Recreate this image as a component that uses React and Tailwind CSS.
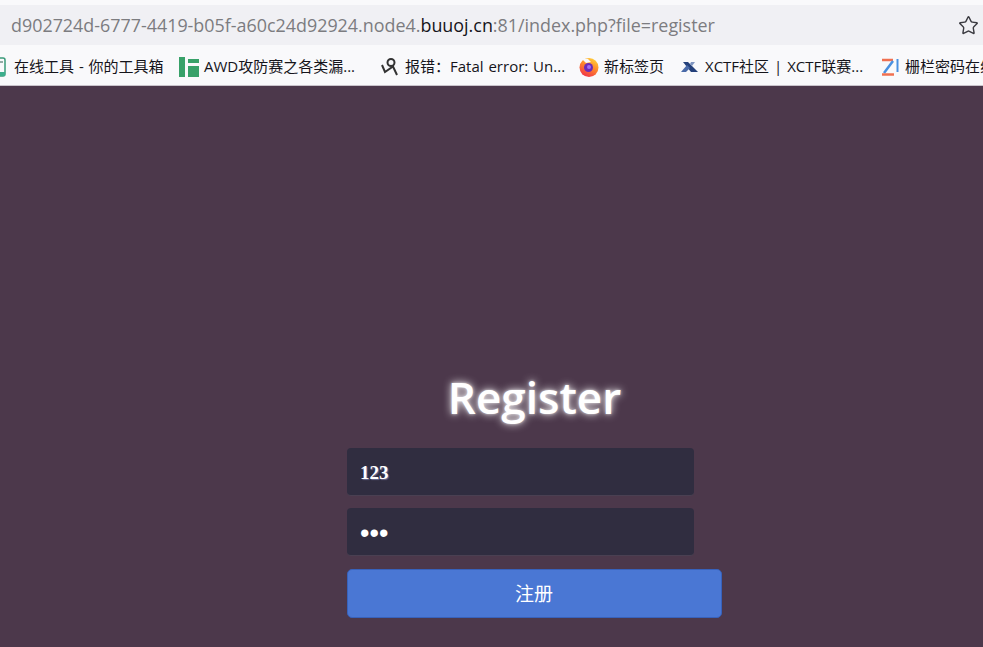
import React from 'react'
import { Star } from 'lucide-react'

const FONT = "font-['Open_Sans','Noto_Sans_CJK_SC',sans-serif]"

export default function App() {
  return (
    <div className={`h-[647px] w-[983px] overflow-hidden flex flex-col bg-[#4c384b] ${FONT}`}>
      {/* Address bar */}
      <div className="bg-[#f9f9fb] pt-[5px] shrink-0">
        <div className="h-10 bg-[#f0f0f4] flex items-center pl-[11px] pr-[4px]">
          <div className="flex-1 pt-[1px] text-[17.9px] text-[#7c7c80] whitespace-nowrap">
            d902724d-6777-4419-b05f-a60c24d92924.node4.<span className="text-[#15141a]">buuoj.cn</span>:81/index.php?file=register
          </div>
          <Star size={21} strokeWidth={1.6} className="text-[#3a3a40]" />
        </div>
      </div>

      {/* Bookmarks */}
      <div className="h-[41px] shrink-0 bg-[#f9f9fb] border-b border-[#c9c3cb] pt-[3px] flex items-center overflow-hidden whitespace-nowrap text-[15px] text-[#15141a] [word-spacing:1px]">
        <Bookmark className="ml-[-11px] w-[190px]" icon={<SheetIcon />} label="在线工具 - 你的工具箱" />
        <Bookmark className="w-[201px]" icon={<AwdIcon />} label="AWD攻防赛之各类漏..." />
        <Bookmark className="w-[199px]" icon={<FaultIcon />} label="报错：Fatal error: Un..." />
        <Bookmark className="w-[101px]" icon={<FoxIcon />} label="新标签页" />
        <Bookmark className="w-[200px]" icon={<XctfIcon />} label="XCTF社区 | XCTF联赛..." />
        <Bookmark icon={<ZjIcon />} label="栅栏密码在线" />
      </div>

      {/* Form */}
      <div className="flex-1 pt-[285px] pl-[347px]">
        <div className="w-[375px] flex flex-col">
          <h1 className="text-center text-[44px] leading-[52px] font-semibold text-white [text-shadow:0_0_9px_#fff,0_0_3px_#ffffffaa]">
            Register
          </h1>
          <input
            readOnly
            value="123"
            className="mt-[25px] h-12 w-[347px] rounded-[4px] bg-[#302d40] border-b border-[#4a4052] pl-[13px] pt-[3px] text-[19px] font-bold font-['Liberation_Serif',serif] text-white outline-none [text-shadow:1px_1px_1px_#6a6a90]"
          />
          <input
            readOnly
            type="password"
            value="123"
            className="mt-3 h-12 w-[347px] rounded-[4px] bg-[#302d40] border-b border-[#4a4052] pl-[13px] pt-[3px] text-[27px] font-['Liberation_Sans',sans-serif] text-white outline-none"
          />
          <button className="mt-[13px] h-[49px] w-full rounded-[5px] bg-[#4a77d4] border border-[#3762bc] pt-[1px] pr-[1px] text-white text-[19px]">
            注册
          </button>
        </div>
      </div>
    </div>
  )
}

function Bookmark({ icon, label, className = '' }) {
  return (
    <div className={`flex items-center shrink-0 ${className}`}>
      <span className="w-[20px] mr-[5px] flex justify-center shrink-0">{icon}</span>
      <span>{label}</span>
    </div>
  )
}

function SheetIcon() {
  return (
    <svg width="16" height="20" viewBox="0 0 16 20" fill="none">
      <rect x="1" y="1" width="13" height="18" rx="2" stroke="#3a9a7a" strokeWidth="1.5" />
      <path d="M3 5 H12 M3 5 V13" stroke="#2f5f50" strokeWidth="1.2" />
      <rect x="1" y="15" width="13" height="4" fill="#3cae8c" />
    </svg>
  )
}

function AwdIcon() {
  return (
    <svg width="20" height="20" viewBox="0 0 20 20">
      <rect width="6" height="20" fill="#38a169" />
      <rect x="9" y="2" width="11" height="4" fill="#38a169" />
      <rect x="9" y="9" width="11" height="11" fill="#38a169" />
    </svg>
  )
}

function FaultIcon() {
  return (
    <svg width="18" height="20" viewBox="0 0 18 20" fill="none" stroke="#333" strokeWidth="2">
      <circle cx="10" cy="5.5" r="3.5" />
      <path d="M1 8 L4 15 L12 9.5 L16 18" />
    </svg>
  )
}

function FoxIcon() {
  return (
    <svg width="20" height="20" viewBox="0 0 20 20">
      <defs>
        <linearGradient id="foxGrad" x1="0.8" y1="0" x2="0.3" y2="1">
          <stop offset="0%" stopColor="#ffd53a" />
          <stop offset="45%" stopColor="#ff8a2a" />
          <stop offset="100%" stopColor="#f0324a" />
        </linearGradient>
      </defs>
      <circle cx="10" cy="10.5" r="9.5" fill="url(#foxGrad)" />
      <path d="M3 2 L7 6 L12 5 L9 2 Z" fill="#f9f9fb" />
      <circle cx="9.5" cy="10.5" r="4.5" fill="#6b2bb8" />
      <circle cx="10" cy="10" r="2" fill="#a06cf0" />
    </svg>
  )
}

function XctfIcon() {
  return (
    <svg width="18" height="12" viewBox="0 0 18 12">
      <path d="M2 1 H7 L17 11 H10 Z" fill="#24407a" />
      <path d="M0 11 L6 4 L9 7 L5 11 Z" fill="#4a6aa8" />
      <path d="M10 1 H14 L11 5 L9 3 Z" fill="#7f95c0" />
    </svg>
  )
}

function ZjIcon() {
  return (
    <svg width="18" height="18" viewBox="0 0 18 18" fill="none">
      <path d="M1 2 H12" stroke="#f07050" strokeWidth="2.5" />
      <path d="M3 15 L12 3" stroke="#4a90e0" strokeWidth="2.5" />
      <path d="M1 16.5 H13" stroke="#f07050" strokeWidth="2.5" />
      <path d="M16.5 1 V14" stroke="#4a90e0" strokeWidth="2" />
    </svg>
  )
}
